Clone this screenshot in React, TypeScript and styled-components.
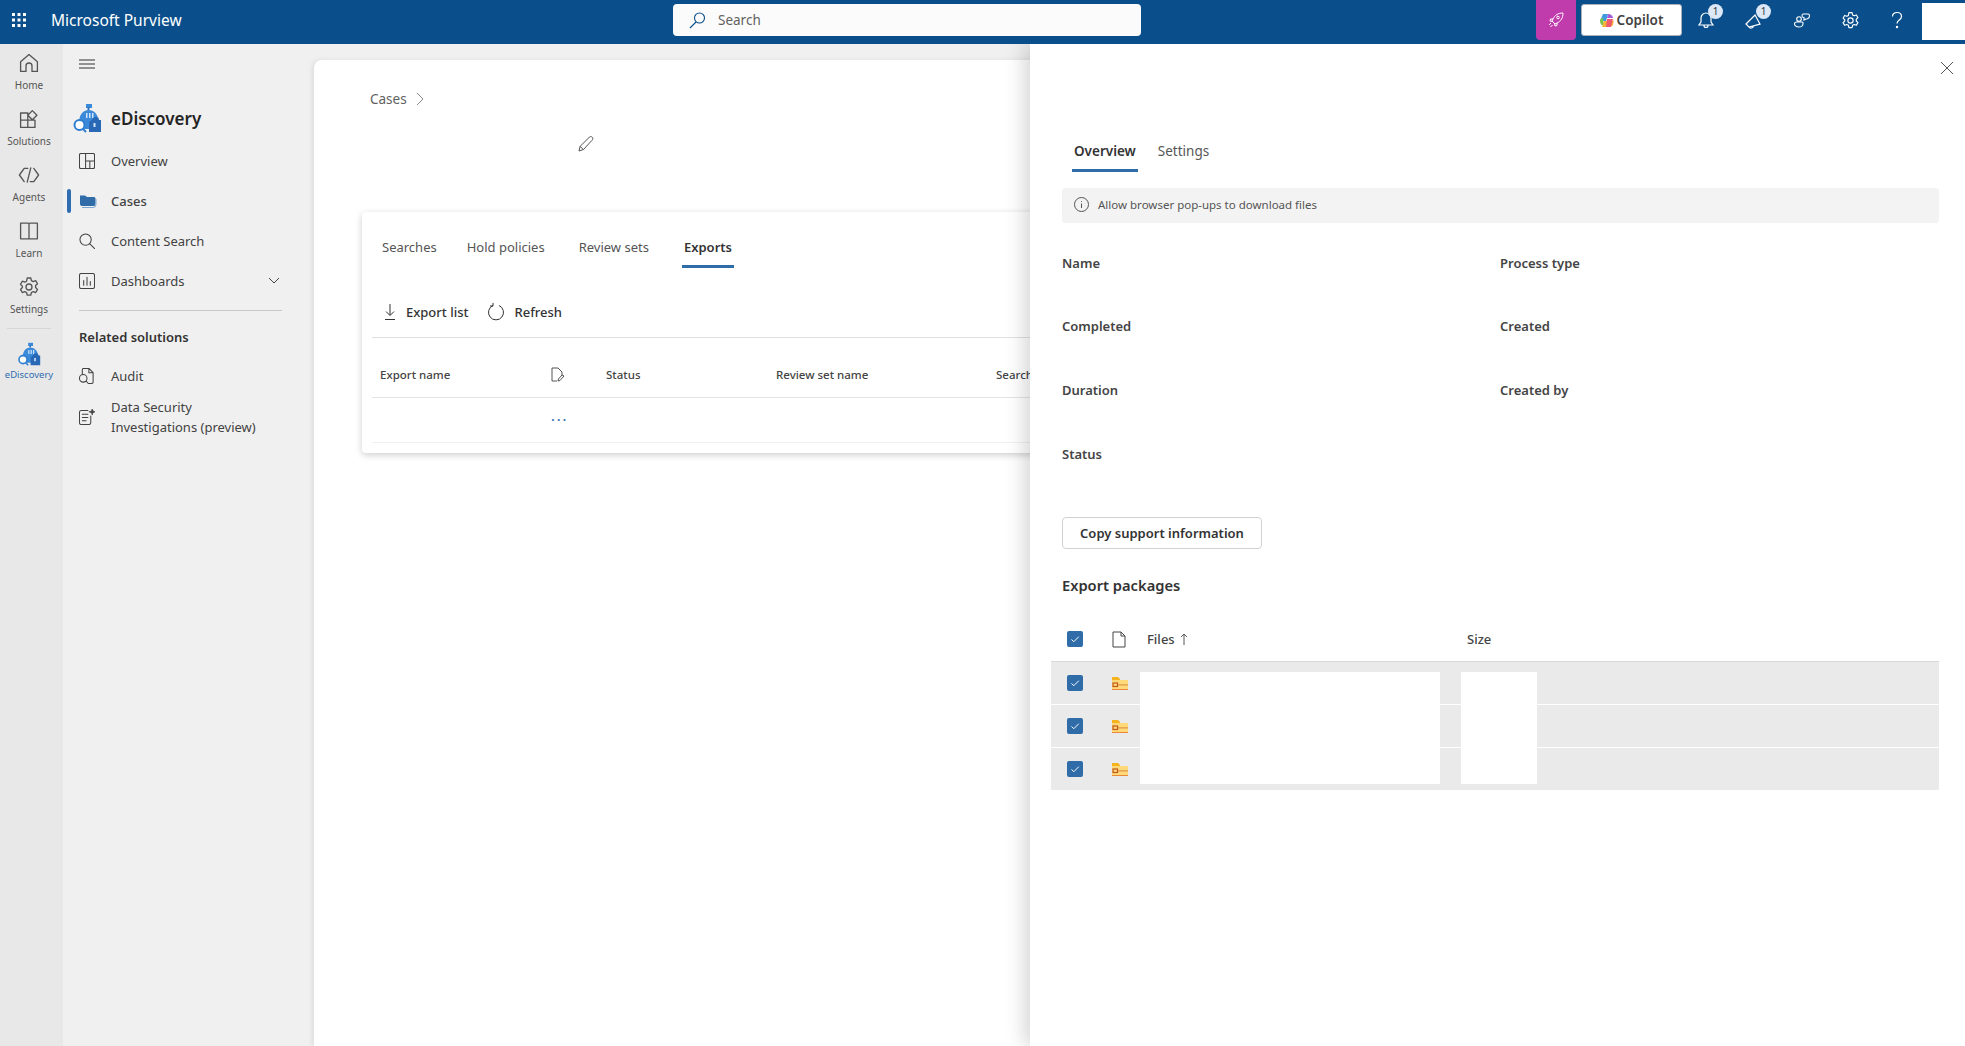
import React from "react";
import styled, { createGlobalStyle } from "styled-components";

const Global = createGlobalStyle`
  html, body { margin: 0; padding: 0; height: 100%; background: #f0f0f0; }
  body { font-family: "Noto Sans", "Open Sans", sans-serif; color: #242424; overflow: hidden; }
  * { box-sizing: border-box; }
`;

const Page = styled.div`width: 1965px; height: 1046px; display: flex; flex-direction: column; position: relative; overflow: hidden;`;

/* Top bar */
const TopBar = styled.header`height: 44px; padding-bottom: 4px; background: #0a4f8b; display: flex; align-items: center; flex: none; position: relative; z-index: 3;`;
const Waffle = styled.div`width: 51px; flex: none; padding-left: 11px; display: flex; color: #fff;`;
const Brand = styled.div`width: 622px; color: #fff; font-size: 15.5px; flex: none;`;
const SearchBox = styled.div`width: 468px; height: 32px; background: #fbfbfb; border-radius: 4px; display: flex; align-items: center; padding-left: 16px; gap: 12px; color: #616161; font-size: 13.5px; flex: none;`;
const TopRight = styled.div`margin-left: 395px; display: flex; align-items: flex-start; height: 40px; flex: none;`;
const Purple = styled.div`width: 40px; height: 40px; background: #c03bab; border-radius: 0 0 4px 4px; display: flex; align-items: center; justify-content: center; color: #fff; margin-right: 5px;`;
const CopilotBtn = styled.div`width: 101px; height: 32px; margin-top: 4px; background: #fff; border: 1px solid #a9b1ba; border-radius: 3px; display: flex; align-items: center; justify-content: center; gap: 3px; font-size: 13.5px; font-weight: 600; color: #424242;`;
const TopIcon = styled.div<{ $w: number }>`width: ${p => p.$w}px; height: 40px; display: flex; align-items: center; justify-content: center; color: #fff; position: relative;`;
const Badge = styled.span`position: absolute; top: 4px; right: 7px; width: 15px; height: 15px; border-radius: 50%; background: #dce8f7; color: #333; font-size: 10px; line-height: 15px; text-align: center;`;
const Avatar = styled.div`width: 43px; height: 37px; margin-top: 3px; margin-left: 3px; background: #fff;`;

const Body = styled.div`flex: 1; display: flex; min-height: 0; position: relative;`;

/* Rail */
const Rail = styled.nav`width: 63px; padding-right: 5px; background: #e8e8e8; flex: none; display: flex; flex-direction: column; align-items: center;`;
const RailItem = styled.div<{ $active?: boolean }>`width: 58px; height: 56px; display: flex; flex-direction: column; align-items: center; padding-top: 7px; gap: ${p => p.$active ? 2 : 4}px; color: ${p => p.$active ? "#2f6cb0" : "#555"}; font-size: ${p => p.$active ? 9.5 : 10}px; line-height: 13px; white-space: nowrap;`;
const RailDivider = styled.div`width: 44px; height: 1px; background: #d6d6d6; margin: 4px 0 6px;`;

/* Nav */
const SideNav = styled.nav`width: 251px; flex: none; background: #f0f0f0; padding: 8px 0 0 16px; position: relative;`;
const Burger = styled.div`height: 24px; display: flex; align-items: center; color: #333;`;
const AppHead = styled.div`display: flex; align-items: center; gap: 9px; margin: 22px 0 3px -7px; font-size: 17px; font-weight: 600; color: #242424; height: 40px;`;
const NavRow = styled.div<{ $active?: boolean }>`height: 40px; display: flex; align-items: center; gap: ${p => p.$active ? 14 : 16}px; font-size: 13px; color: #424242; position: relative; font-weight: ${p => p.$active ? 500 : 400}; width: 203px;
  ${p => p.$active ? `&::before { content: ""; position: absolute; left: -12px; top: 8px; width: 4px; height: 24px; border-radius: 2px; background: #2f6cb0; }` : ""}`;
const NavLabel = styled.span`flex: 1; line-height: 20px;`;
const NavChevron = styled.svg`margin-right: 2px;`;
const NavDivider = styled.div`width: 203px; height: 1px; background: #c8c8c8; margin: 9px 0 16px;`;
const NavHeading = styled.div`font-size: 13px; font-weight: 600; line-height: 20px; margin-bottom: 9px; color: #333;`;
const TallRow = styled(NavRow)`height: 42px;`;

/* Main */
const Main = styled.main`flex: 1; background: #fff; margin-top: 16px; border-radius: 8px 0 0 0; padding: 29px 0 0 48px; box-shadow: -2px 0 5px rgba(0,0,0,.08); position: relative; overflow: hidden;`;
const Crumb = styled.div`display: flex; align-items: center; gap: 9px; height: 20px; font-size: 13.5px; color: #616161; margin-left: 8px;`;
const TitleRow = styled.div`height: 103px; padding: 26px 0 0 216px; color: #555;`;
const Card = styled.section`width: 900px; height: 241px; background: #fff; border-radius: 4px; box-shadow: 0 2px 7px rgba(0,0,0,.2); padding: 0 0 0 10px;`;
const Tabs = styled.div`display: flex; height: 75px; padding: 23px 0 0 10px; font-size: 13px; color: #555;`;
const Tab = styled.div<{ $active?: boolean; $ml?: number }>`position: relative; height: 24px; line-height: 24px; margin-left: ${p => p.$ml ?? 0}px; font-weight: ${p => p.$active ? 600 : 400}; color: ${p => p.$active ? "#333" : "#555"};
  ${p => p.$active ? `&::after { content: ""; position: absolute; left: -2px; right: -2px; top: 30px; height: 3px; background: #2f6ca8; }` : ""}`;
const Toolbar = styled.div`height: 51px; display: flex; gap: 19px; align-items: center; padding-left: 11px; border-bottom: 1px solid #e0e0e0; font-size: 13px; color: #333; font-weight: 500;`;
const ToolBtn = styled.div`display: flex; align-items: center; gap: 9px;`;
const GridRow = styled.div<{ $h: number; $top?: number; $line?: string }>`height: ${p => p.$h}px; padding-top: ${p => p.$top ?? 0}px; display: grid; grid-template-columns: 171px 55px 170px 220px 1fr; align-items: center; padding-left: 8px; border-bottom: 1px solid ${p => p.$line ?? "#e4e4e4"}; font-size: 11.5px; font-weight: 500; color: #444;`;
const Dots = styled.div`color: #2f6cb0; font-size: 14px; font-weight: 500; letter-spacing: 2px; line-height: 1; margin-top: -9px;`;

/* Panel */
const Panel = styled.aside`position: absolute; top: 0; bottom: 0; left: 1030px; right: 0; background: #fff; box-shadow: -6px 0 18px rgba(0,0,0,.16); padding: 0 26px 0 32px; z-index: 2;`;
const CloseRow = styled.div`height: 31px; display: flex; justify-content: flex-end; align-items: flex-end; margin-right: -15px; color: #555;`;
const PanelTabs = styled.div`display: flex; gap: 22px; height: 113px; padding: 64px 0 0 12px; font-size: 13.5px;`;
const InfoBar = styled.div`height: 35px; background: #f3f3f3; border-radius: 3px; display: flex; align-items: center; gap: 9px; padding-left: 12px; padding-bottom: 2px; font-size: 11.5px; color: #555;`;
const Fields = styled.div`display: grid; grid-template-columns: 438px 1fr; grid-auto-rows: 63.7px; margin-top: 14.500px;`;
const Field = styled.div`padding-top: 13px; line-height: 24px; font-size: 13px; font-weight: 600; color: #444;`;
const SupportBtn = styled.div`width: 200px; height: 32px; border: 1px solid #d1d1d1; border-radius: 4px; display: flex; align-items: center; justify-content: center; margin-top: 25px; font-size: 13px; font-weight: 600; color: #333;`;
const SectionTitle = styled.h3`margin: 24px 0 0; font-size: 14.7px; line-height: 24px; font-weight: 600; color: #333;`;
const TableWrap = styled.div`position: relative; margin: 20px 0 0 -11px;`;
const Tr = styled.div<{ $head?: boolean }>`height: ${p => p.$head ? 45 : 42}px; display: grid; grid-template-columns: 45px 35px 320px 1fr; align-items: center; padding-left: 16px; font-size: 13px; font-weight: 500; color: #444;
  background: ${p => p.$head ? "#fff" : "#eaeaea"};
  margin-bottom: ${p => p.$head ? 0 : 1}px;
  border-bottom: ${p => p.$head ? "1px solid #d8d8d8" : "none"};`;
const Check = styled.span`width: 16px; height: 16px; border-radius: 2px; background: #2f6ca8; display: flex; align-items: center; justify-content: center; color: #fff;`;
const Files = styled.span`display: flex; align-items: center; gap: 5px;`;
const Redact = styled.div<{ $l: number; $w: number }>`position: absolute; top: 55px; height: 112px; left: ${p => p.$l}px; width: ${p => p.$w}px; background: #fff;`;

const Ic = styled.svg.attrs({ fill: "none", stroke: "currentColor", strokeWidth: 1.1, strokeLinecap: "round", strokeLinejoin: "round" })``;

const Svg = ({ s = 20, vb = "0 0 20 20", children }: { s?: number; vb?: string; children: React.ReactNode }) => (
  <Ic width={s} height={s} viewBox={vb}>{children}</Ic>
);
const NavIc = ({ children }: { children: React.ReactNode }) => <Svg s={16} vb="1.500 1.500 17 17">{children}</Svg>;

const HomeI = () => <Svg s={24}><path d="M3 9 10 3l7 6v8h-4.500v-4.500a2.500 2.500 0 0 0-5 0V17H3z" /></Svg>;
const SolutionsI = () => <Svg s={24}><path d="M3 5h6v6H3zM3 11v6h6v-6M9 11h6v6H9zM12.800 3l3.800 3.800-3.800 3.800L9 6.800z" /></Svg>;
const AgentsI = () => <Svg s={24}><path d="M6 4.500 2 10l4 5.500M14 4.500 18 10l-4 5.500M11.500 4 8.500 16M6 4.500h3M11 15.500h3" /></Svg>;
const LearnI = () => <Svg s={24}><path d="M3 3.500h6.200c.5 0 .8.300.8.800v12.200H3zM17 3.500h-6.200c-.5 0-.8.300-.8.800v12.200h7z" /></Svg>;
const GearI = ({ s = 24 }: { s?: number }) => <Svg s={s}><circle cx="10" cy="10" r="2.500" /><path d="M8.500 2.500h3l.5 2.200 1.500.8 2.100-.8 1.500 2.600-1.600 1.500v1.700l1.600 1.500-1.500 2.600-2.100-.8-1.500.8-.5 2.200h-3l-.5-2.200-1.500-.8-2.100.8-1.500-2.600 1.600-1.500V9.300L2.900 7.800l1.500-2.600 2.100.8 1.500-.8z" /></Svg>;

const DiscoveryLogo = ({ s = 30 }: { s?: number }) => (
  <svg width={s} height={s} viewBox="0 0 30 30" fill="none">
    <rect x="14" y="1" width="6" height="4" fill="#3b8ad9" />
    <path d="M15.500 4h2v3h-2z" fill="#2f74c0" />
    <path d="M7 20c0-8 4-13 9.500-13S25 11 26 15v11H9z" fill="#3b8ad9" />
    <path d="M14 10h1.500v5H14zM17 10h1.500v5H17zM20 10h1.500v5H20z" fill="#cfe4fa" />
    <path d="M20 17a4 4 0 0 1 4-3h0a3 3 0 0 1 3 3h2v12H17V19z" fill="#2868b4" />
    <rect x="21.500" y="20" width="2" height="4" fill="#cfe4fa" />
    <circle cx="7.500" cy="22" r="5" fill="#fff" stroke="#2f7dd0" strokeWidth="2" />
    <path d="m11 26 3 3" stroke="#2f7dd0" strokeWidth="2" />
  </svg>
);

const ZipFolder = () => (
  <svg width="16" height="13" viewBox="0 0 16 13">
    <path d="M0 0h6l2 2v2H0z" fill="#f5b320" />
    <path d="M0 3h16v10H0z" fill="#fdd97a" />
    <path d="M0 12h16v1H0z" fill="#e8893a" />
    <rect x="1" y="6" width="4.500" height="3.500" fill="none" stroke="#c2571a" strokeWidth="1.200" />
    <path d="M6.500 7.800H16" stroke="#c2571a" strokeWidth="1.200" strokeDasharray="1 1" />
  </svg>
);

const CheckBox = () => (
  <Check>
    <svg width="10" height="10" viewBox="0 0 10 10" fill="none" stroke="currentColor" strokeWidth="1"><path d="m1.500 5.500 2.300 2.200 5-5" /></svg>
  </Check>
);

const PackageRow = () => (
  <Tr><CheckBox /><ZipFolder /><span /><span /></Tr>
);

export default function App() {
  return (
    <Page>
      <Global />
      <TopBar>
        <Waffle>
          <svg width="16" height="16" viewBox="0 0 16 16" fill="currentColor">
            {[1, 6.500, 12].flatMap(y => [1, 6.500, 12].map(x => <rect key={`${x}-${y}`} x={x} y={y} width="3" height="3" />))}
          </svg>
        </Waffle>
        <Brand>Microsoft Purview</Brand>
        <SearchBox>
          <svg width="17" height="17" viewBox="0 0 17 17" fill="none" stroke="#0a4f8b" strokeWidth="1.100"><circle cx="10.500" cy="6" r="5" /><path d="M7 10 1 16" /></svg>
          Search
        </SearchBox>
        <TopRight>
          <Purple>
            <svg width="18" height="18" viewBox="0 0 18 18" fill="none" stroke="currentColor" strokeWidth="1"><path d="M6 8c2-4 5-6 10-6 0 5-2 8-6 10l-2 1-3-3z" /><circle cx="11" cy="6.500" r="1.300" /><path d="M6 8H3.500L3 10l2.500.5M10 12v2.500l-2 .5-.5-2.500M4 12l-2 2M5.500 14l-2 2" /></svg>
          </Purple>
          <CopilotBtn>
            <svg width="14" height="14" viewBox="0 0 14 14">
              <path d="M3 1h5L6 8H0z" fill="#3f9be0" />
              <path d="M8 1c3 0 5 2 5 4H7z" fill="#a45cd8" />
              <path d="M0 8c0-2 1-3 3-3l1 7H2C1 12 0 10 0 8z" fill="#7cc34f" />
              <path d="M4 8h9l1-2-1 6c-1 2-8 2-8 2H2z" fill="#f5b335" />
              <path d="M7 6h6l-2 8H6z" fill="#ef5a6f" />
            </svg>
            Copilot
          </CopilotBtn>
          <TopIcon $w={48}>
            <svg width="20" height="20" viewBox="0 0 20 20" fill="none" stroke="currentColor" strokeWidth="1.200"><path d="M5 8a5 5 0 0 1 10 0v4l2 3H3l2-3zM8 15.500a2 2 0 0 0 4 0" /></svg>
            <Badge>1</Badge>
          </TopIcon>
          <TopIcon $w={48}>
            <svg width="22" height="22" viewBox="0 0 22 22" fill="none" stroke="currentColor" strokeWidth="1.200"><path d="M3 15 12 6l5 9-11 3zM6 18a2.500 2.500 0 0 0 4.500-1" /></svg>
            <Badge>1</Badge>
          </TopIcon>
          <TopIcon $w={48}>
            <svg width="18" height="18" viewBox="0 0 18 18" fill="none" stroke="currentColor" strokeWidth="1.100"><circle cx="6" cy="8" r="2.300" /><path d="M1.500 13c0-1 1-2 2-2H9c.8 0 1.200.8 1 2-.3 2-2 3-4 3s-4.500-1-4.500-3zM10 3h5c1 0 1.500.5 1.500 1.500S16 8 13 8l-2 1V6.500c-1 0-2-.5-2-1.500S9 3 10 3z" /></svg>
          </TopIcon>
          <TopIcon $w={48}><GearI s={21} /></TopIcon>
          <TopIcon $w={45}>
            <svg width="20" height="20" viewBox="0 0 20 20" fill="none" stroke="currentColor" strokeWidth="1.200"><path d="M5.500 6.500C5.500 4 7.500 2.500 10 2.500s4.500 1.500 4.500 4c0 3.500-4.500 3.500-4.500 7" /><circle cx="10" cy="17" r=".6" fill="currentColor" /></svg>
          </TopIcon>
          <Avatar />
        </TopRight>
      </TopBar>

      <Body>
        <Rail>
          <RailItem><HomeI />Home</RailItem>
          <RailItem><SolutionsI />Solutions</RailItem>
          <RailItem><AgentsI />Agents</RailItem>
          <RailItem><LearnI />Learn</RailItem>
          <RailItem><GearI />Settings</RailItem>
          <RailDivider />
          <RailItem $active><DiscoveryLogo s={24} />eDiscovery</RailItem>
        </Rail>

        <SideNav>
          <Burger>
            <svg width="16" height="10" viewBox="0 0 16 10" fill="none" stroke="#333" strokeWidth="1"><path d="M0 1h16M0 5h16M0 9h16" /></svg>
          </Burger>
          <AppHead><DiscoveryLogo />eDiscovery</AppHead>
          <NavRow><NavIc><path d="M2 3.500A1.500 1.500 0 0 1 3.500 2h13A1.500 1.500 0 0 1 18 3.500v13a1.500 1.500 0 0 1-1.500 1.500h-13A1.500 1.500 0 0 1 2 16.500zM8.500 2v16M8.500 10H18M13 10v8" /></NavIc><NavLabel>Overview</NavLabel></NavRow>
          <NavRow $active>
            <svg width="18" height="16" viewBox="0 0 18 16"><path d="M1 2.500h5l2 1.500h7a1.500 1.500 0 0 1 1.500 1.500V11a2 2 0 0 1-2 2H3a2 2 0 0 1-2-2z" fill="#2f6ca8" /><path d="M3 14.500h11a3 3 0 0 0 3-3V6" fill="none" stroke="#7ea8d2" strokeWidth="1" /></svg>
            <NavLabel>Cases</NavLabel>
          </NavRow>
          <NavRow><NavIc><circle cx="8.500" cy="8.500" r="6" /><path d="m13 13 5.500 5.500" /></NavIc><NavLabel>Content Search</NavLabel></NavRow>
          <NavRow>
            <NavIc><path d="M2 4a2 2 0 0 1 2-2h12a2 2 0 0 1 2 2v12a2 2 0 0 1-2 2H4a2 2 0 0 1-2-2zM6.500 9.500v5M10 6v8.500M13.500 10.500v4" /></NavIc>
            <NavLabel>Dashboards</NavLabel>
            <NavChevron width="12" height="8" viewBox="0 0 12 8" fill="none" stroke="#444" strokeWidth="1"><path d="m1 1 5 5 5-5" /></NavChevron>
          </NavRow>
          <NavDivider />
          <NavHeading>Related solutions</NavHeading>
          <NavRow><NavIc><path d="M5 8V3.500A1.500 1.500 0 0 1 6.500 2H12l4.500 4.500v10a1.500 1.500 0 0 1-1.500 1.500h-3M12 2v4.500h4.500" /><circle cx="6" cy="12.500" r="4" /><path d="m9 15.500 3 3" /></NavIc><NavLabel>Audit</NavLabel></NavRow>
          <TallRow>
            <NavIc><path d="M11 3H4a2 2 0 0 0-2 2v11a2 2 0 0 0 2 2h8a2 2 0 0 0 2-2V9M5 7h6M5 10.500h6M5 14h4" /><path d="m15.500 1 .9 2.600 2.600.9-2.600.9-.9 2.600-.9-2.600-2.600-.9 2.600-.9z" fill="currentColor" strokeWidth={.6} /></NavIc>
            <NavLabel>Data Security<br />Investigations (preview)</NavLabel>
          </TallRow>
        </SideNav>

        <Main>
          <Crumb>
            Cases
            <svg width="9" height="14" viewBox="0 0 9 14" fill="none" stroke="#888" strokeWidth="1"><path d="m1 1 6 6-6 6" /></svg>
          </Crumb>
          <TitleRow>
            <svg width="16" height="16" viewBox="0 0 16 16" fill="none" stroke="currentColor" strokeWidth="1"><path d="M1 15l1-4.500L11.500 1c1-.8 2.500-.3 3 .5.500 1 .3 2-.5 2.800L5.500 13.500z" /><path d="m2 10.500 3.500 3" /></svg>
          </TitleRow>
          <Card>
            <Tabs>
              <Tab>Searches</Tab>
              <Tab $ml={30}>Hold policies</Tab>
              <Tab $ml={34}>Review sets</Tab>
              <Tab $ml={35} $active>Exports</Tab>
            </Tabs>
            <Toolbar>
              <ToolBtn>
                <svg width="14" height="18" viewBox="0 0 14 18" fill="none" stroke="#333" strokeWidth="1"><path d="M7 1v11M3 8.500 7 12.500l4-4M2 16.500h10" /></svg>
                Export list
              </ToolBtn>
              <ToolBtn>
                <svg width="18" height="20" viewBox="0 0 18 20" fill="none" stroke="#333" strokeWidth="1"><path d="M6 3.500a7.500 7.500 0 1 0 6 0M6 1v3H3" /></svg>
                Refresh
              </ToolBtn>
            </Toolbar>
            <GridRow $h={60} $top={14}>
              <span>Export name</span>
              <svg width="14" height="15" viewBox="0 0 14 15" fill="none" stroke="#555" strokeWidth="1"><path d="M6 14H1V1h6l4 4v3M13 9l-4 4.500-2 .5.500-2L11 8z" /></svg>
              <span>Status</span>
              <span>Review set name</span>
              <span>Search</span>
            </GridRow>
            <GridRow $h={45} $line="#f0f0f0">
              <span />
              <Dots>...</Dots>
              <span />
              <span />
              <span />
            </GridRow>
          </Card>
        </Main>

        <Panel>
          <CloseRow>
            <svg width="14" height="14" viewBox="0 0 14 14" fill="none" stroke="currentColor" strokeWidth="1"><path d="m1 1 12 12M13 1 1 13" /></svg>
          </CloseRow>
          <PanelTabs>
            <Tab $active>Overview</Tab>
            <Tab>Settings</Tab>
          </PanelTabs>
          <InfoBar>
            <svg width="15" height="15" viewBox="0 0 15 15" fill="none" stroke="#555" strokeWidth="1"><circle cx="7.500" cy="7.500" r="7" /><path d="M7.500 6.500v4.500M7.500 4v.8" /></svg>
            Allow browser pop-ups to download files
          </InfoBar>
          <Fields>
            <Field>Name</Field><Field>Process type</Field>
            <Field>Completed</Field><Field>Created</Field>
            <Field>Duration</Field><Field>Created by</Field>
            <Field>Status</Field>
          </Fields>
          <SupportBtn>Copy support information</SupportBtn>
          <SectionTitle>Export packages</SectionTitle>
          <TableWrap>
            <Tr $head>
              <CheckBox />
              <svg width="14" height="17" viewBox="0 0 14 17" fill="none" stroke="#444" strokeWidth="1"><path d="M1 1h8l4 4v11H1zM9 1v4h4" /></svg>
              <Files>Files
                <svg width="8" height="12" viewBox="0 0 8 12" fill="none" stroke="#555" strokeWidth="1"><path d="M4 12V1M1 4l3-3 3 3" /></svg>
              </Files>
              <span>Size</span>
            </Tr>
            <PackageRow />
            <PackageRow />
            <PackageRow />
            <Redact $l={89} $w={300} />
            <Redact $l={410} $w={76} />
          </TableWrap>
        </Panel>
      </Body>
    </Page>
  );
}
